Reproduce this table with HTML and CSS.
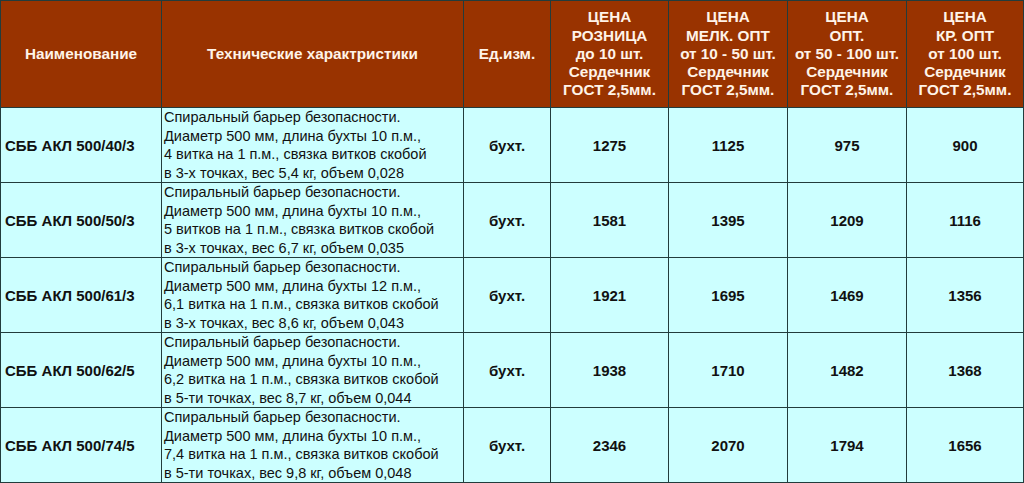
FILE: index.html
```html
<!DOCTYPE html>
<html lang="ru">
<head>
<meta charset="utf-8">
<title>Прайс СББ АКЛ</title>
<link rel="stylesheet" href="styles.css">
</head>
<body>
<div class="table">
  <div class="h">Наименование</div>
  <div class="h">Технические характристики</div>
  <div class="h">Ед.изм.</div>
  <div class="h">ЦЕНА<br>РОЗНИЦА<br>до 10 шт.<br>Сердечник<br>ГОСТ 2,5мм.</div>
  <div class="h">ЦЕНА<br>МЕЛК. ОПТ<br>от 10 - 50 шт.<br>Сердечник<br>ГОСТ 2,5мм.</div>
  <div class="h">ЦЕНА<br>ОПТ.<br>от 50 - 100 шт.<br>Сердечник<br>ГОСТ 2,5мм.</div>
  <div class="h">ЦЕНА<br>КР. ОПТ<br>от 100 шт.<br>Сердечник<br>ГОСТ 2,5мм.</div>

  <div class="c name">СББ АКЛ 500/40/3</div>
  <div class="c tech">Спиральный барьер безопасности.<br>Диаметр 500 мм, длина бухты 10 п.м.,<br>4 витка на 1 п.м., связка витков скобой<br>в 3-х точках, вес 5,4 кг, объем 0,028</div>
  <div class="c num">бухт.</div>
  <div class="c num">1275</div>
  <div class="c num">1125</div>
  <div class="c num">975</div>
  <div class="c num">900</div>

  <div class="c name">СББ АКЛ 500/50/3</div>
  <div class="c tech">Спиральный барьер безопасности.<br>Диаметр 500 мм, длина бухты 10 п.м.,<br>5 витков на 1 п.м., связка витков скобой<br>в 3-х точках, вес 6,7 кг, объем 0,035</div>
  <div class="c num">бухт.</div>
  <div class="c num">1581</div>
  <div class="c num">1395</div>
  <div class="c num">1209</div>
  <div class="c num">1116</div>

  <div class="c name">СББ АКЛ 500/61/3</div>
  <div class="c tech">Спиральный барьер безопасности.<br>Диаметр 500 мм, длина бухты 12 п.м.,<br>6,1 витка на 1 п.м., связка витков скобой<br>в 3-х точках, вес 8,6 кг, объем 0,043</div>
  <div class="c num">бухт.</div>
  <div class="c num">1921</div>
  <div class="c num">1695</div>
  <div class="c num">1469</div>
  <div class="c num">1356</div>

  <div class="c name">СББ АКЛ 500/62/5</div>
  <div class="c tech">Спиральный барьер безопасности.<br>Диаметр 500 мм, длина бухты 10 п.м.,<br>6,2 витка на 1 п.м., связка витков скобой<br>в 5-ти точках, вес 8,7 кг, объем 0,044</div>
  <div class="c num">бухт.</div>
  <div class="c num">1938</div>
  <div class="c num">1710</div>
  <div class="c num">1482</div>
  <div class="c num">1368</div>

  <div class="c name">СББ АКЛ 500/74/5</div>
  <div class="c tech">Спиральный барьер безопасности.<br>Диаметр 500 мм, длина бухты 10 п.м.,<br>7,4 витка на 1 п.м., связка витков скобой<br>в 5-ти точках, вес 9,8 кг, объем 0,048</div>
  <div class="c num">бухт.</div>
  <div class="c num">2346</div>
  <div class="c num">2070</div>
  <div class="c num">1794</div>
  <div class="c num">1656</div>
</div>
</body>
</html>
```

FILE: styles.css
```css
html, body {
  margin: 0;
  padding: 0;
  background: #ffffff;
}
.table {
  display: grid;
  grid-template-columns: 160px 301px 86px 117px 118px 118px 116px;
  grid-template-rows: 106px repeat(5, 74px);
  gap: 1px;
  padding: 1px;
  width: 1024px;
  box-sizing: border-box;
  background: #223c3c;
  font-family: "Liberation Sans", Arial, sans-serif;
  font-size: 15px;
}
.h {
  background: #993300;
  color: #fff3e8;
  font-weight: bold;
  font-size: 15.3px;
  text-align: center;
  line-height: 18.25px;
  display: flex;
  align-items: center;
  justify-content: center;
}
.c {
  background: #ccffff;
  color: #111111;
  display: flex;
  align-items: center;
}
.name {
  font-weight: bold;
  padding-left: 4px;
}
.tech {
  padding-left: 2px;
  font-size: 14.5px;
  line-height: 18.5px;
  align-items: flex-start;
  white-space: nowrap;
}
.num {
  font-weight: bold;
  justify-content: center;
}
```
